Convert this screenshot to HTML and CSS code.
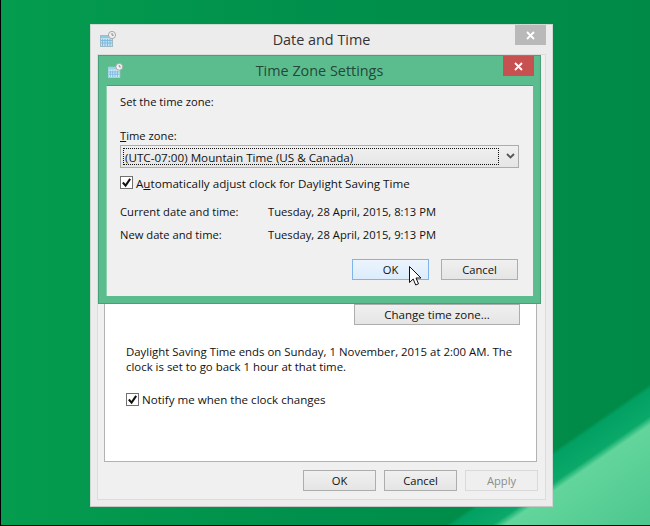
FILE: index.html
```html
<!DOCTYPE html>
<html lang="en">
<head>
<meta charset="utf-8">
<title>Date and Time</title>
<link rel="stylesheet" href="styles.css">
</head>
<body>
<div class="desktop">
  <section class="window outer">
    <header class="titlebar outer-bar">
      <svg class="app-icon" viewBox="0 0 16 16" aria-hidden="true">
        <rect x="0.5" y="4.5" width="12" height="11" fill="#bfe3f5" stroke="#9fb9c6"/>
        <rect x="0.5" y="4.5" width="12" height="2.5" fill="#8fc7e6"/>
        <path d="M2.5 8v7M5 8v7M7.5 8v7M10 8v7M1 9.5h11M1 12h11" stroke="#7fbadb" stroke-width="1"/>
        <circle cx="12" cy="4" r="3.6" fill="#eef0f0" stroke="#a8a8a8"/>
        <path d="M12 2v2.2h1.8" fill="none" stroke="#777" stroke-width="0.8"/>
      </svg>
      <h1 class="title">Date and Time</h1>
      <button class="close close-idle" aria-label="Close"><svg viewBox="0 0 9 9"><path d="M1 1l7 7M8 1l-7 7" stroke="#fff" stroke-width="1.8"/></svg></button>
    </header>
    <div class="frame">
      <div class="panel">
        <div class="change-row"><button class="btn change">Change time zone...</button></div>
        <p class="dst">Daylight Saving Time ends on Sunday, 1 November, 2015 at 2:00 AM. The<br>clock is set to go back 1 hour at that time.</p>
        <label class="check notify"><span class="box"><svg viewBox="0 0 12 12"><path d="M2 6l3 3.4L10 2" fill="none" stroke="#111" stroke-width="2.2"/></svg></span>Notify me when the clock changes</label>
      </div>
      <div class="actions">
        <button class="btn act">OK</button>
        <button class="btn act">Cancel</button>
        <button class="btn act off">Apply</button>
      </div>
    </div>
  </section>

  <section class="window dialog">
    <header class="titlebar dialog-bar">
      <svg class="app-icon small" viewBox="0 0 16 16" aria-hidden="true">
        <rect x="0.5" y="4.5" width="12" height="11" fill="#cfeaf8" stroke="#a8d4e4"/>
        <rect x="0.5" y="4.5" width="12" height="2.5" fill="#9bd0ec"/>
        <path d="M2.5 8v7M5 8v7M7.5 8v7M10 8v7M1 9.5h11M1 12h11" stroke="#7fbadb" stroke-width="1"/>
        <circle cx="12" cy="4" r="3.6" fill="#f2f4f4" stroke="#a8a8a8"/>
        <path d="M12 2v2.2h1.8" fill="none" stroke="#777" stroke-width="0.8"/>
      </svg>
      <h2 class="title dialog-title">Time Zone Settings</h2>
      <button class="close close-red" aria-label="Close"><svg viewBox="0 0 9 9"><path d="M1 1l7 7M8 1l-7 7" stroke="#fff" stroke-width="1.8"/></svg></button>
    </header>
    <div class="client">
      <p class="line set">Set the time zone:</p>
      <p class="line zone-label"><u>T</u>ime zone:</p>
      <div class="combo">
        <div class="combo-value">(UTC-07:00) Mountain Time (US &amp; Canada)</div>
        <svg class="chev" viewBox="0 0 9 6"><path d="M1 1l3.500 3.500L8 1" fill="none" stroke="#555" stroke-width="1.800"/></svg>
      </div>
      <label class="check auto"><span class="box"><svg viewBox="0 0 12 12"><path d="M2 6l3 3.400L10 2" fill="none" stroke="#111" stroke-width="2.200"/></svg></span>A<u>u</u>tomatically adjust clock for Daylight Saving Time</label>
      <div class="row first"><span class="key">Current date and time:</span><span>Tuesday, 28 April, 2015, 8:13 PM</span></div>
      <div class="row"><span class="key">New date and time:</span><span>Tuesday, 28 April, 2015, 9:13 PM</span></div>
      <div class="dialog-actions">
        <button class="btn dlg hot">OK</button>
        <button class="btn dlg">Cancel</button>
      </div>
    </div>
  </section>

  <svg class="cursor" viewBox="0 0 13 20" aria-hidden="true">
    <path d="M0.500 0.500v16l3.700-3.500 2.500 6 2.800-1.200-2.500-5.800h5z" fill="#fff" stroke="#111" stroke-width="1"/>
  </svg>
</div>
</body>
</html>
```

FILE: styles.css
```css
* { box-sizing: border-box; }
html, body { margin: 0; padding: 0; }
body {
  width: 650px;
  height: 526px;
  overflow: hidden;
  font-family: "Open Sans", "Noto Sans", sans-serif;
  font-size: 11.2px;
  color: #111;
}
.desktop {
  position: relative;
  width: 650px;
  height: 526px;
  border-left: 1px solid #000;
  border-bottom: 1px solid #000;
  background:
    linear-gradient(145.4deg, transparent 85.5%, #02a062 86%, #0aa96a 88.8%, #62d59c 89.7%, #4cc78e 100%),
    linear-gradient(90deg, #049c4e 0%, #008f4c 50%, #008a47 100%);
}
.window { position: absolute; }
.outer {
  left: 89px;
  top: 24px;
  width: 463px;
  height: 483px;
  background: #ececec;
  border: 1px solid #cfd8d3;
  border-bottom-color: #c6c6c6;
  display: flex;
  flex-direction: column;
}
.titlebar {
  position: relative;
  display: flex;
  align-items: center;
  justify-content: center;
}
.outer-bar { height: 29px; flex: none; }
.app-icon {
  position: absolute;
  left: 9px;
  top: 6px;
  width: 16px;
  height: 16px;
}
.app-icon.small { left: 9px; top: 7px; width: 15px; height: 15px; }
.title {
  margin: 0;
  font-size: 14.4px;
  font-weight: 400;
  color: #333;
  line-height: 20px;
}
.close {
  position: absolute;
  top: 0;
  width: 31px;
  height: 20px;
  padding: 0;
  border: 0;
  display: flex;
  align-items: center;
  justify-content: center;
}
.close svg { width: 9px; height: 9px; }
.close-idle { right: 6px; background: #b9b9b9; }
.close-red { right: 6px; background: #c75050; }
.frame {
  flex: 1;
  margin: 0 6px 6px;
  background: #f0f0f0;
  border: 1px solid #dcdcdc;
  display: flex;
  flex-direction: column;
  padding: 25px 7px 0 6px;
}
.panel {
  height: 382px;
  margin-right: 1px;
  background: #fff;
  border: 1px solid #b2b2b2;
  border-top: 0;
  padding: 224px 16px 0 21px;
}
.change-row { display: flex; justify-content: flex-end; }
.btn {
  font: inherit;
  color: #111;
  height: 21px;
  padding: 0;
  border: 1px solid #adadad;
  background: linear-gradient(#f0f0f0, #e5e5e5);
  line-height: 18px;
}
.change { width: 166px; font-size: 11.5px; }
.dst { margin: 19px 0 0; line-height: 15px; white-space: nowrap; font-size: 11.41px; }
.check { display: flex; align-items: center; line-height: 15px; }
.box {
  width: 13px;
  height: 13px;
  background: #fff;
  border: 1px solid #707070;
  margin-right: 3px;
  flex: none;
  display: flex;
}
.box svg { width: 11px; height: 11px; }
.notify { margin-top: 18px; font-size: 11.58px; }
.actions {
  display: flex;
  justify-content: flex-end;
  gap: 8px;
  margin-top: 8px;
}
.act { width: 73px; }
.off { color: #8c8c8c; border-color: #d9d9d9; background: #efefef; }
.dialog {
  left: 97px;
  top: 55px;
  width: 443px;
  height: 249px;
  background: #5bbd8d;
  border: 1px solid #48a079;
  display: flex;
  flex-direction: column;
}
.dialog-bar { height: 29px; flex: none; }
.dialog-title { color: #24483a; }
.client {
  flex: 1;
  margin: 0 7px 7px;
  background: #f0f0f0;
  border-top: 1px solid #48a079;
  border-left: 1px solid #8ed1ae;
  padding: 8px 14px 0 13px;
}
.line { margin: 0; line-height: 16px; }
.zone-label { margin-top: 18px; }
.combo {
  position: relative;
  height: 23px;
  margin-top: 1px;
  border: 1px solid #acacac;
  background: linear-gradient(#f0f0f0, #e5e5e5);
  padding: 2px 19px 2px 2px;
}
.combo-value {
  height: 17px;
  line-height: 17px;
  border: 1px dotted #111;
  padding-left: 1px;
  font-size: 11.66px;
}
.chev {
  position: absolute;
  right: 3px;
  top: 7px;
  width: 9px;
  height: 6px;
}
.auto { margin-top: 8px; font-size: 11.63px; }
.auto .box { margin-bottom: 2px; }
.row { display: flex; line-height: 16px; margin-top: 7px; }
.row.first { margin-top: 13px; }
.key { width: 148px; }
.dialog-actions {
  display: flex;
  gap: 12px;
  justify-content: flex-end;
  margin: 16px 1px 0 0;
}
.dlg { width: 77px; }
.hot {
  border-color: #7eb4ea;
  background: linear-gradient(#ecf4fc, #dcecfc);
}
.cursor {
  position: absolute;
  left: 408px;
  top: 266px;
  width: 13px;
  height: 20px;
}
```
